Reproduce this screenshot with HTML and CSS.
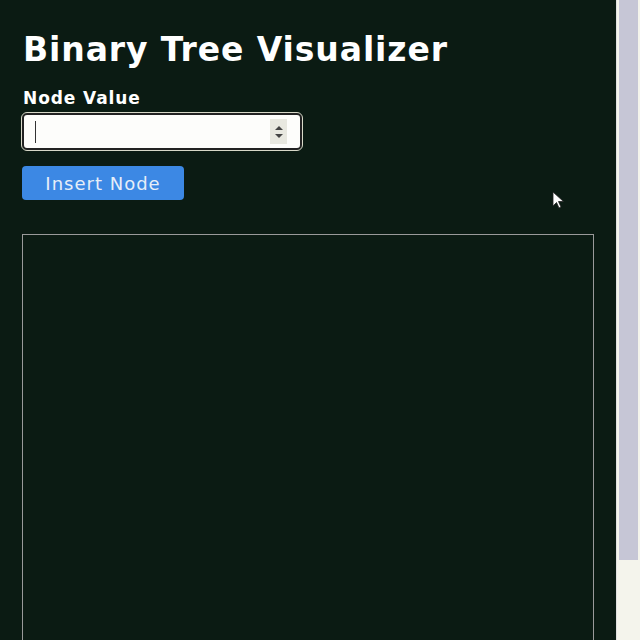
FILE: index.html
```html
<!DOCTYPE html>
<html lang="en">
<head>
<meta charset="utf-8">
<title>Binary Tree Visualizer</title>
<link rel="stylesheet" href="styles.css">
</head>
<body>
<main class="page">
  <h1 class="title">Binary Tree Visualizer</h1>
  <label class="field-label" for="nodeValue">Node Value</label>
  <div class="input-wrap">
    <input id="nodeValue" class="value-input" type="text">
    <span class="caret"></span>
    <span class="spinner">
      <svg width="12" height="18" viewBox="0 0 12 18"><path d="M2 7 L6 3 L10 7 Z" fill="#444"/><path d="M2 11 L6 15 L10 11 Z" fill="#444"/></svg>
    </span>
  </div>
  <button class="insert-btn" type="button">Insert Node</button>
  <div class="tree-canvas"></div>
</main>
<div class="scrollbar"><div class="scroll-thumb"></div></div>
<svg class="cursor" width="14" height="20" viewBox="0 0 14 20"><path d="M1 1 L1 15 L4.5 11.5 L7 17 L9 16 L6.5 10.5 L11.5 10.5 Z" fill="#fff" stroke="#222" stroke-width="0.8"/></svg>
</body>
</html>
```
FILE: styles.css
```css
html, body {
  margin: 0;
  padding: 0;
  height: 100%;
  overflow: hidden;
  background: #0b1b13;
}
body {
  font-family: "DejaVu Sans", Verdana, sans-serif;
  color: #ffffff;
}
.page {
  width: 572px;
  padding: 30px 22px 0 22px;
  display: flex;
  flex-direction: column;
  align-items: flex-start;
}
.title {
  margin: 0 0 0 1px;
  font-size: 33px;
  line-height: 40px;
  letter-spacing: 0.9px;
  font-weight: 700;
  color: #ffffff;
}
.field-label {
  margin: 18px 0 0 1px;
  font-size: 17px;
  line-height: 20px;
  letter-spacing: 0.9px;
  font-weight: 700;
}
.input-wrap {
  position: relative;
  margin-top: 5px;
  width: 280px;
  height: 37px;
}
.value-input {
  box-sizing: border-box;
  width: 100%;
  height: 100%;
  margin: 0;
  border: 2px solid #222;
  border-radius: 5px;
  outline: 1px solid #d8d8c8;
  background: #fdfdfb;
  font-size: 16px;
  padding: 0 12px;
}
.caret {
  position: absolute;
  left: 13px;
  top: 8px;
  width: 1px;
  height: 22px;
  background: #333;
}
.spinner {
  position: absolute;
  right: 15px;
  top: 6px;
  width: 17px;
  height: 25px;
  background: #e8e8e0;
  display: flex;
  align-items: center;
  justify-content: center;
}
.insert-btn {
  margin-top: 16px;
  height: 34px;
  width: 162px;
  border: none;
  border-radius: 4px;
  background: #3c88e4;
  color: #e6eef8;
  font-family: "DejaVu Sans", Verdana, sans-serif;
  font-size: 18px;
  letter-spacing: 1px;
  padding: 0;
}
.tree-canvas {
  margin-top: 34px;
  box-sizing: border-box;
  width: 572px;
  height: 500px;
  border: 1px solid #9a9a9a;
}
.scrollbar {
  position: fixed;
  top: 0;
  right: 0;
  width: 23px;
  height: 640px;
  background: #f4f4ec;
  border-left: 1px solid #e0e0e0;
}
.scroll-thumb {
  margin: 0 2px;
  height: 560px;
  background: #c6c6d6;
}
.cursor {
  position: absolute;
  left: 552px;
  top: 191px;
}
```
